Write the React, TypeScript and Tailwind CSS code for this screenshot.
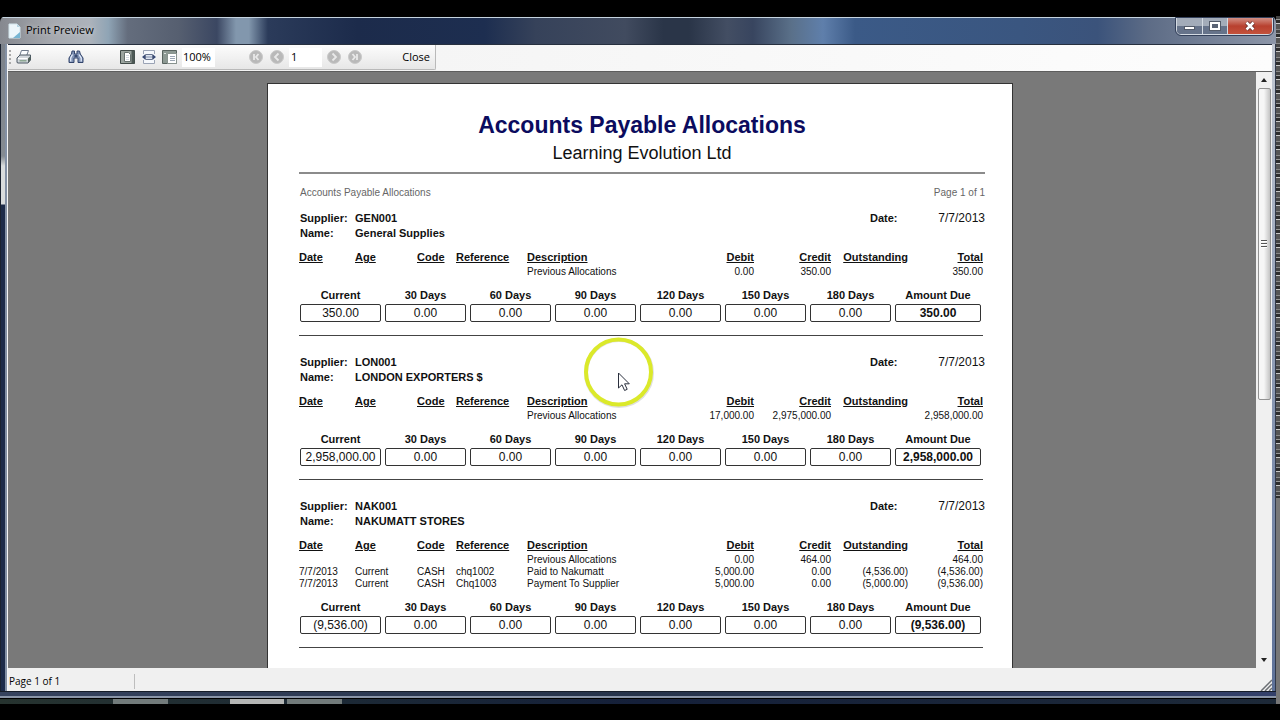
import type { ReactNode } from "react";

type Row = {
  date?: string;
  age?: string;
  code?: string;
  reference?: string;
  description: string;
  debit: string;
  credit: string;
  outstanding?: string;
  total: string;
};

type Supplier = {
  code: string;
  name: string;
  date: string;
  rows: Row[];
  current: string;
  due: string;
};

const suppliers: Supplier[] = [
  {
    code: "GEN001",
    name: "General Supplies",
    date: "7/7/2013",
    rows: [{ description: "Previous Allocations", debit: "0.00", credit: "350.00", total: "350.00" }],
    current: "350.00",
    due: "350.00",
  },
  {
    code: "LON001",
    name: "LONDON EXPORTERS $",
    date: "7/7/2013",
    rows: [{ description: "Previous Allocations", debit: "17,000.00", credit: "2,975,000.00", total: "2,958,000.00" }],
    current: "2,958,000.00",
    due: "2,958,000.00",
  },
  {
    code: "NAK001",
    name: "NAKUMATT STORES",
    date: "7/7/2013",
    rows: [
      { description: "Previous Allocations", debit: "0.00", credit: "464.00", total: "464.00" },
      {
        date: "7/7/2013",
        age: "Current",
        code: "CASH",
        reference: "chq1002",
        description: "Paid to Nakumatt",
        debit: "5,000.00",
        credit: "0.00",
        outstanding: "(4,536.00)",
        total: "(4,536.00)",
      },
      {
        date: "7/7/2013",
        age: "Current",
        code: "CASH",
        reference: "Chq1003",
        description: "Payment To Supplier",
        debit: "5,000.00",
        credit: "0.00",
        outstanding: "(5,000.00)",
        total: "(9,536.00)",
      },
    ],
    current: "(9,536.00)",
    due: "(9,536.00)",
  },
];

const periods = ["30 Days", "60 Days", "90 Days", "120 Days", "150 Days", "180 Days"];

function SupplierSection({ supplier }: { supplier: Supplier }) {
  return (
    <section className="mb-[19px]">
      <div className="flex justify-between leading-[15px]">
        <dl className="grid grid-cols-[55px_auto] pl-px text-[11px] font-bold">
          <dt>Supplier:</dt>
          <dd>{supplier.code}</dd>
          <dt>Name:</dt>
          <dd>{supplier.name}</dd>
        </dl>
        <dl className="flex w-[115px] justify-between">
          <dt className="text-[11px] font-bold">Date:</dt>
          <dd className="text-[12px]">{supplier.date}</dd>
        </dl>
      </div>

      <table className="mt-2 w-[684px] table-fixed text-left text-[10px] leading-3">
        <colgroup>
          <col className="w-[56px]" />
          <col className="w-[62px]" />
          <col className="w-[39px]" />
          <col className="w-[71px]" />
          <col />
          <col className="w-[80px]" />
          <col className="w-[77px]" />
          <col className="w-[77px]" />
          <col className="w-[75px]" />
        </colgroup>
        <thead className="text-[11px] leading-4 underline">
          <tr className="h-[17px] align-top">
            <th>Date</th>
            <th>Age</th>
            <th>Code</th>
            <th>Reference</th>
            <th>Description</th>
            <th className="text-right">Debit</th>
            <th className="text-right">Credit</th>
            <th className="text-right">Outstanding</th>
            <th className="text-right">Total</th>
          </tr>
        </thead>
        <tbody>
          {supplier.rows.map((row, i) => (
            <tr key={i}>
              <td>{row.date}</td>
              <td>{row.age}</td>
              <td>{row.code}</td>
              <td>{row.reference}</td>
              <td>{row.description}</td>
              <td className="text-right">{row.debit}</td>
              <td className="text-right">{row.credit}</td>
              <td className="text-right">{row.outstanding}</td>
              <td className="text-right">{row.total}</td>
            </tr>
          ))}
        </tbody>
      </table>

      <dl className="mt-[10px] grid grid-cols-[repeat(7,81px)_86px] gap-x-1 pl-px text-center">
        <Bucket label="Current" value={supplier.current} />
        {periods.map((p) => (
          <Bucket key={p} label={p} value="0.00" />
        ))}
        <Bucket label="Amount Due" value={supplier.due} strong />
      </dl>
      <hr className="mt-[13px] mr-[2px] border-[#444]" />
    </section>
  );
}

function Bucket({ label, value, strong = false }: { label: string; value: string; strong?: boolean }) {
  return (
    <div>
      <dt className="text-[11px] leading-[15px] font-bold">{label}</dt>
      <dd
        className={
          strong
            ? "mt-px rounded-xs border border-[#333] text-[12px] leading-4 font-bold"
            : "mt-px rounded-xs border border-[#333] text-[12px] leading-4"
        }
      >
        {value}
      </dd>
    </div>
  );
}

function ToolButton({ label, disabled, children }: { label: string; disabled?: boolean; children: ReactNode }) {
  return (
    <button type="button" aria-label={label} disabled={disabled} className="flex h-4 w-4 shrink-0 items-center justify-center">
      {children}
    </button>
  );
}

function PrinterIcon() {
  return (
    <svg viewBox="0 0 16 16" className="h-4 w-4">
      <path d="M5.500 1.500h7L10.500 7h-7z" fill="#fbfdff" stroke="#6f7b8c" />
      <path d="M1 9l3-3h10.500v5L12 14H1.500L1 13z" fill="#d3d8dd" stroke="#4d5964" />
      <path d="M2 9.500h10" stroke="#fff" />
      <path d="M12 9.500v4l2.500-2.500V7z" fill="#51605a" />
      <path d="M3.500 11.700h7" stroke="#8da893" strokeWidth="1.500" />
    </svg>
  );
}

function BinocularsIcon() {
  return (
    <svg viewBox="0 0 16 16" className="h-4 w-4">
      <path d="M4 2h2.500v3H9V2h2.500l.8 3 2.700 4v4.500h-5V9H6v4.500H1V9l2.500-4z" fill="#8193b5" stroke="#33456c" strokeLinejoin="round" />
      <path d="M4.500 5.500 2.700 9v3.500M11 5.500l2.200 3.500v3.500" stroke="#e3ecfb" strokeWidth="1.300" fill="none" />
      <path d="M6.500 7h3" stroke="#22335a" strokeWidth="1.500" />
    </svg>
  );
}

function WholePageIcon() {
  return (
    <svg viewBox="0 0 16 16" className="h-4 w-4">
      <path d="M.5 1.500h14v13H.5z" fill="#9aa39e" stroke="#414b48" />
      <path d="M11.500 2h3v12.500h-3z" fill="#4d5955" />
      <path d="M4.500 3.500h4l2 2v7h-6z" fill="#fff" stroke="#66716e" />
      <path d="M6 6.500h3M6 8.500h3M6 10.500h3" stroke="#d3dae2" />
    </svg>
  );
}

function PageWidthIcon() {
  return (
    <svg viewBox="0 0 16 16" className="h-4 w-4">
      <path d="M2.500 5V1.500h11V5M2.500 11v3.500h11V11" fill="#f5f8fc" stroke="#9aa3b5" />
      <path d="M1 5.500h14v5H1z" fill="#f1f4f9" />
      <path d="m1 8 3-2.500v5zM15 8l-3-2.500v5z" fill="#3b4c76" />
      <path d="M4.500 5.500h7v5h-7z" fill="#dfe5ef" stroke="#66728d" />
      <path d="M5 8h6" stroke="#8592b0" />
    </svg>
  );
}

function MarginsIcon() {
  return (
    <svg viewBox="0 0 16 16" className="h-4 w-4">
      <path d="M.5 1.500h14v13H.5z" fill="#8d9993" stroke="#58635f" />
      <path d="M5.500 4.500h9v10h-9z" fill="#fff" stroke="#88938e" />
      <path d="M8 7.500h5M8 9.500h5M8 11.500h5" stroke="#9aa5b3" />
      <path d="M2 4.500h2" stroke="#dce2df" />
    </svg>
  );
}

function NavIcon({ d }: { d: string }) {
  return (
    <svg viewBox="0 0 16 16" className="h-4 w-4" fill="none">
      <circle cx="8" cy="8" r="6.500" fill="#b9b9b9" stroke="#c9c9c9" />
      <path d={d} stroke="#e9e9e9" strokeWidth="1.800" />
    </svg>
  );
}

function TitleBar() {
  return (
    <header className="flex h-[27px] shrink-0 items-start justify-between border-t border-[#c5d3df] bg-[linear-gradient(90deg,#85888f_0%,#a5a8ae_4%,#adb3bb_7%,#8fa4b5_8.500%,#646d7d_10%,#565f70_14%,#3b4762_17%,#8297ad_18.500%,#8297ad_19.500%,#2b3b5a_21%,#1c2b4b_28%,#1d2e50_38%,#36425a_42%,#414b5f_49%,#2a3548_52%,#2a3548_54%,#434e63_57%,#38455f_59%,#5a7089_62%,#5f7fab_64.500%,#3b5a87_67%,#3a5680_80%,#3b537b_86%,#5d6c86_90%,#8d96a8_100%)] pr-[3px] pl-[7px]">
      <div className="flex h-[25px] items-center gap-[3px]">
        <svg viewBox="0 0 16 16" className="h-4 w-4" aria-hidden="true">
          <path d="M2 1h8l3 3v11H2z" fill="#edf6fb" stroke="#d2e4ec" />
          <path d="M13 9v6H6z" fill="#77b5d3" />
          <path d="M10 1v3h3" fill="#b5d4e2" />
        </svg>
        <h1 className="font-['Open_Sans',sans-serif] text-[11px] text-black [text-shadow:0_0_5px_#ffffff90]">Print Preview</h1>
      </div>
      <div className="flex h-[17px] overflow-hidden rounded-b-[5px] border border-t-0 border-[#d3dae2] outline outline-[#33405a]">
        <button type="button" aria-label="Minimize" className="flex w-[26px] items-end justify-center border-r border-[#d3dae2] bg-linear-to-b from-[#a3acb9] from-50% to-[#66738a] to-50% pb-1">
          <span className="h-[4px] w-[11px] border border-[#535b69] bg-white" />
        </button>
        <button type="button" aria-label="Maximize" className="flex w-[25px] items-center justify-center border-r border-[#d3dae2] bg-linear-to-b from-[#a3acb9] from-50% to-[#66738a] to-50%">
          <span className="h-2 w-[10px] border-2 border-white bg-[#5a6475] outline outline-[#535b69]" />
        </button>
        <button type="button" aria-label="Close window" className="flex w-[44px] items-center justify-center bg-linear-to-b from-[#d28f85] from-0% via-[#b8402f] via-50% to-[#c3523c]">
          <svg viewBox="0 0 12 10" className="h-[10px] w-3" fill="none">
            <path d="m2.500 1.500 7 7m0-7-7 7" stroke="#5f2d29" strokeWidth="4" />
            <path d="m2.500 1.500 7 7m0-7-7 7" stroke="#fff" strokeWidth="2.500" />
          </svg>
        </button>
      </div>
    </header>
  );
}

function Toolbar() {
  return (
    <div className="h-[27px] shrink-0 border-t border-[#27303f] bg-linear-to-r from-[#f1f1f1] to-[#fdfdfd] font-['Open_Sans',sans-serif] text-[11px]">
      <div className="flex h-[25px] w-[428px] items-center rounded-br-xs border-r border-b border-[#b9b9b9] bg-linear-to-b from-[#fcfcfc] to-[#e7e7e7] pl-px">
        <span className="mr-[5px] h-[14px] border-l-2 border-dotted border-[#a9a9a9]" />
        <ToolButton label="Print"><PrinterIcon /></ToolButton>
        <span className="w-9" />
        <ToolButton label="Find"><BinocularsIcon /></ToolButton>
        <span className="w-9" />
        <div className="flex gap-[5px]">
          <ToolButton label="Whole page"><WholePageIcon /></ToolButton>
          <ToolButton label="Page width"><PageWidthIcon /></ToolButton>
          <ToolButton label="Margins"><MarginsIcon /></ToolButton>
        </div>
        <input aria-label="Zoom" defaultValue="100%" className="ml-1 h-[19px] w-[33px] bg-white pb-[2px] pl-px" />
        <div className="ml-[33px] flex gap-[5px]">
          <ToolButton label="First page" disabled><NavIcon d="M6 5v6M10.500 5 8 8l2.500 3" /></ToolButton>
          <ToolButton label="Previous page" disabled><NavIcon d="M9.500 4.500 6 8l3.500 3.500" /></ToolButton>
        </div>
        <input aria-label="Page number" defaultValue="1" className="mx-1 h-[19px] w-[33px] bg-white pb-[2px] pl-[2px]" />
        <div className="flex gap-[5px]">
          <ToolButton label="Next page" disabled><NavIcon d="M6.500 4.500 10 8l-3.500 3.500" /></ToolButton>
          <ToolButton label="Last page" disabled><NavIcon d="M5.500 5 8 8l-2.500 3M10 5v6" /></ToolButton>
        </div>
        <button type="button" className="ml-auto pr-[5px]">Close</button>
      </div>
    </div>
  );
}

function ScrollBar() {
  return (
    <div className="flex w-4 shrink-0 flex-col items-center bg-[#f0f0f0]">
      <button type="button" aria-label="Scroll up" className="flex h-4 w-full items-center justify-center">
        <svg viewBox="0 0 6 4" className="h-1 w-[6px]"><path d="M3 0l3 4H0z" fill="#222" /></svg>
      </button>
      <div className="flex h-[312px] w-[13px] flex-col items-center justify-center gap-px rounded-xs border border-[#929292] bg-linear-to-r from-[#f6f6f6] from-45% to-[#c4c4c4]">
        <span className="h-[2px] w-[6px] border-b border-white bg-[#555]" />
        <span className="h-[2px] w-[6px] border-b border-white bg-[#555]" />
        <span className="h-[2px] w-[6px] border-b border-white bg-[#555]" />
      </div>
      <button type="button" aria-label="Scroll down" className="mt-auto flex h-4 w-full items-center justify-center">
        <svg viewBox="0 0 6 4" className="h-1 w-[6px]"><path d="M3 4l3-4H0z" fill="#222" /></svg>
      </button>
    </div>
  );
}

function Report() {
  return (
    <article className="min-h-[1050px] w-[746px] border border-[#333] bg-white pt-[27px] pr-[27px] pl-[31px] font-['Liberation_Sans',Arial,sans-serif] text-[#111]">
      <h2 className="text-center text-[23px] leading-7 font-bold text-[#0b0b5e]">Accounts Payable Allocations</h2>
      <p className="text-center text-[18px] leading-7">Learning Evolution Ltd</p>
      <hr className="mt-[5px] border-t-2 border-[#8b8b8b]" />
      <div className="mt-3 mb-[11px] flex justify-between pl-px text-[10px] leading-[14px] text-[#666]">
        <span>Accounts Payable Allocations</span>
        <span>Page 1 of 1</span>
      </div>
      {suppliers.map((s) => (
        <SupplierSection key={s.code} supplier={s} />
      ))}
    </article>
  );
}

function Pointer() {
  return (
    <svg viewBox="0 0 72 72" className="pointer-events-none absolute top-[336px] left-[582px] h-[72px] w-[72px]" fill="none" aria-hidden="true">
      <circle cx="37" cy="37" r="33" stroke="#999" strokeOpacity=".3" strokeWidth="4" />
      <circle cx="36.500" cy="36" r="32.500" stroke="#dbe92a" strokeWidth="4" />
      <path d="M36.500 37v15l3.500-3.200 2.600 5.700 2.600-1.200-2.600-5.500h4.700z" fill="#fff" stroke="#2a2f3d" />
    </svg>
  );
}

export default function App() {
  return (
    <div className="relative flex h-screen flex-col overflow-hidden bg-black py-4 text-black">
      <div className="flex min-h-0 flex-1">
        <div className="flex min-w-0 flex-1 flex-col">
          <div className="flex min-h-0 flex-1 flex-col overflow-hidden rounded-t-md pt-px">
            <TitleBar />
            <div className="flex min-h-0 flex-1">
              <div className="w-[7px] shrink-0 border-r-2 border-l border-r-[#8390a4] border-l-[#1a2230] bg-[linear-gradient(180deg,#7c828a_0px,#858b92_112px,#d9dcdd_122px,#d9dcdd_160px,#1d2b49_161px)]" />
              <div className="flex min-w-0 flex-1 flex-col border-l border-[#f5f5f5]">
                <Toolbar />
                <div className="flex min-h-0 flex-1 border-t border-[#5d5d5d]">
                  <main className="flex min-w-0 flex-1 justify-center overflow-hidden bg-[#797979] pt-[11px] pl-4">
                    <Report />
                  </main>
                  <ScrollBar />
                </div>
                <footer className="flex h-[23px] shrink-0 items-end justify-between bg-[#f0f0f0] font-['Open_Sans',sans-serif] text-[10px]">
                  <span className="mb-[2px] flex h-[15px] w-[127px] items-center border-r border-[#bdbdbd] pl-px">Page 1 of 1</span>
                  <svg viewBox="0 0 12 12" className="h-3 w-3" aria-hidden="true">
                    <path d="M1 12 12 1M5 12l7-7M9 12l3-3" stroke="#6b6f74" strokeWidth="1.500" />
                  </svg>
                </footer>
              </div>
              <div className="w-1 shrink-0 border-r border-r-[#313a4c] bg-linear-to-b from-[#c3c9d2] to-[#5d7198]" />
            </div>
            <div className="h-[7px] shrink-0 border-t border-b-2 border-t-[#151c28] border-b-[#8a95a8] bg-linear-to-r from-[#35425e] via-[#26334a] to-[#33406a]" />
          </div>
          <div className="flex h-[6px] shrink-0 gap-[3px] border-t border-black bg-linear-to-r from-[#26332f] via-[#15203a] to-[#1d2938] pl-[113px]">
            <span className="w-[55px] bg-[#727b7b]" />
            <span className="ml-[59px] w-[54px] bg-[#b4b6b5]" />
            <span className="w-[55px] bg-[#727b7b]" />
          </div>
        </div>
        <div className="flex w-[4px] shrink-0 flex-col bg-[#777]">
          <div className="h-[70%] bg-[repeating-linear-gradient(180deg,#444_0px,#444_3px,#999_3px,#999_4px,#2d2d2d_4px,#2d2d2d_7px,#c9c9c9_7px,#c9c9c9_8px,#555_8px,#555_13px,#888_13px,#888_14px)]" />
        </div>
      </div>
      <Pointer />
    </div>
  );
}
